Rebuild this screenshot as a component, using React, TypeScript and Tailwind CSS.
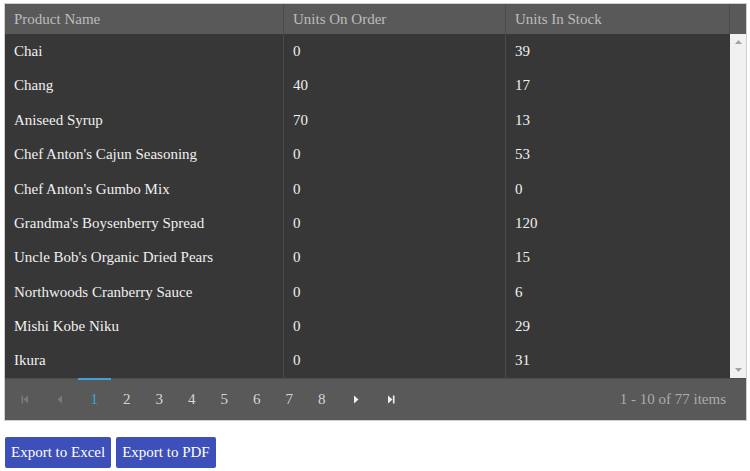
const products = [
  { name: 'Chai', onOrder: 0, inStock: 39 },
  { name: 'Chang', onOrder: 40, inStock: 17 },
  { name: 'Aniseed Syrup', onOrder: 70, inStock: 13 },
  { name: "Chef Anton's Cajun Seasoning", onOrder: 0, inStock: 53 },
  { name: "Chef Anton's Gumbo Mix", onOrder: 0, inStock: 0 },
  { name: "Grandma's Boysenberry Spread", onOrder: 0, inStock: 120 },
  { name: "Uncle Bob's Organic Dried Pears", onOrder: 0, inStock: 15 },
  { name: 'Northwoods Cranberry Sauce', onOrder: 0, inStock: 6 },
  { name: 'Mishi Kobe Niku', onOrder: 0, inStock: 29 },
  { name: 'Ikura', onOrder: 0, inStock: 31 },
];

// small pager glyphs: triangle, optionally with a bar
function PagerIcon({ dir, bar, disabled }: { dir: 'left' | 'right'; bar?: boolean; disabled?: boolean }) {
  const fill = disabled ? '#7a7a7a' : '#f0f0f0';
  return (
    <svg width="10" height="11" viewBox="0 0 10 11">
      {dir === 'left' ? (
        <>
          {bar && <rect x="1.5" y="1.5" width="1.6" height="8" fill={fill} />}
          <polygon points="8,1.5 8,9.5 3.5,5.5" fill={fill} />
        </>
      ) : (
        <>
          <polygon points="2,1.5 2,9.5 6.5,5.5" fill={fill} />
          {bar && <rect x="6.9" y="1.5" width="1.6" height="8" fill={fill} />}
        </>
      )}
    </svg>
  );
}

export default function App() {
  return (
    <div className="pl-[4px] pt-[3px] font-['Liberation_Serif',serif]">
      {/* Grid */}
      <div className="w-[743px] border border-[#cfcfcf] bg-[#373737]">
        {/* Header */}
        <div className="flex h-[30px] bg-[#595959] text-[15px] text-[#bcbcbc]">
          <div className="w-[279px] flex items-center pl-[9px] border-r border-[#4a4a4a]">Product Name</div>
          <div className="w-[222px] flex items-center pl-[9px] border-r border-[#4a4a4a]">Units On Order</div>
          <div className="w-[224px] flex items-center pl-[9px] border-r border-[#4a4a4a]">Units In Stock</div>
          <div className="flex-1" />
        </div>

        {/* Body + scrollbar */}
        <div className="flex">
          <div className="flex flex-col">
            {products.map((p) => (
              <div key={p.name} className="flex h-[34.4px] text-[15px] text-[#f0f0f0]">
                <div className="w-[279px] flex items-center pl-[9px] border-r border-[#4b4b4b]">{p.name}</div>
                <div className="w-[222px] flex items-center pl-[9px] border-r border-[#4b4b4b]">{p.onOrder}</div>
                <div className="w-[224px] flex items-center pl-[9px]">{p.inStock}</div>
              </div>
            ))}
          </div>
          <div className="flex-1 bg-[#f1f1f1] flex flex-col justify-between items-center py-[6px]">
            <svg width="7" height="4" viewBox="0 0 7 4"><polygon points="0,4 7,4 3.5,0" fill="#a3a3a3" /></svg>
            <svg width="7" height="4" viewBox="0 0 7 4"><polygon points="0,0 7,0 3.5,4" fill="#a3a3a3" /></svg>
          </div>
        </div>

        {/* Pager */}
        <div className="flex items-center h-[42px] bg-[#595959] border-t border-[#4c4c4c] pl-[3px] pr-[20px] text-[15px]">
          <div className="w-[34px] flex justify-center"><PagerIcon dir="left" bar disabled /></div>
          <div className="w-[34px] flex justify-center"><PagerIcon dir="left" disabled /></div>
          <div className="flex ml-[2px]">
            {[1, 2, 3, 4, 5, 6, 7, 8].map((n) => (
              <div
                key={n}
                className={
                  n === 1
                    ? 'w-[32.5px] h-[42px] flex items-center justify-center text-[#3ea3dc] border-t-2 border-[#3ea3dc] pb-[2px]'
                    : 'w-[32.5px] h-[42px] flex items-center justify-center text-[#d6d6d6]'
                }
              >
                {n}
              </div>
            ))}
          </div>
          <div className="w-[34px] ml-[2px] flex justify-center"><PagerIcon dir="right" /></div>
          <div className="w-[34px] flex justify-center"><PagerIcon dir="right" bar /></div>
          <div className="flex-1 text-right text-[#acacac]">1 - 10 of 77 items</div>
        </div>
      </div>

      {/* Export buttons */}
      <div className="flex gap-[5px] mt-[16px] pl-[1px]">
        <button className="h-[31px] px-[6px] rounded-[2px] bg-[#3d4fb8] text-white text-[15px]">Export to Excel</button>
        <button className="h-[31px] px-[6px] rounded-[2px] bg-[#3d4fb8] text-white text-[15px]">Export to PDF</button>
      </div>
    </div>
  );
}
